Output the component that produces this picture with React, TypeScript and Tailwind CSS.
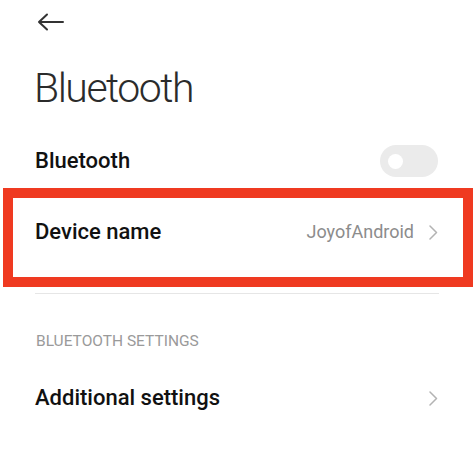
import React from "react";

function Chevron() {
  return (
    <svg width="9" height="15" viewBox="0 0 9 15" fill="none">
      <path d="M1 1 L7.5 7.5 L1 14" stroke="#b3b3b3" strokeWidth="1.5" strokeLinecap="round" strokeLinejoin="round" />
    </svg>
  );
}

export default function App() {
  return (
    <div className="w-[474px] h-[473px] bg-white overflow-hidden" style={{ fontFamily: "Roboto, 'Noto Sans', sans-serif" }}>
      {/* Header */}
      <div className="h-[44px] flex items-center pl-[37px]">
        <svg width="27" height="18" viewBox="0 0 27 18" fill="none">
          <path d="M2 9 H26 M10 1.5 L2 9 L10 16.5" stroke="#333333" strokeWidth="2" strokeLinecap="round" strokeLinejoin="round" />
        </svg>
      </div>

      {/* Title */}
      <h1 className="mt-[24px] pl-[34px] text-[41px] leading-[41px] tracking-[-1.5px] font-light text-[#2b2b2b]">Bluetooth</h1>

      {/* Bluetooth toggle */}
      <div className="mt-[36px] h-[32px] flex items-center justify-between pl-[35px] pr-[36px]">
        <span className="text-[22px] leading-[22px] font-medium text-[#111111]">Bluetooth</span>
        <div className="w-[58px] h-[32px] rounded-full bg-[#ebebeb] flex items-center pl-[8px]">
          <div className="w-[15px] h-[15px] rounded-full bg-white" />
        </div>
      </div>

      {/* Device name (highlighted) */}
      <div className="mt-[11px] ml-[3px] mr-[1px] border-[10px] border-[#ef3a21] pt-[23px] pb-[34px] pl-[22px] pr-[25px] flex items-center justify-between">
        <span className="text-[22px] leading-[22px] font-medium text-[#111111]">Device name</span>
        <div className="flex items-center gap-[15px]">
          <span className="text-[18px] leading-[22px] text-[#8c8c8c]">JoyofAndroid</span>
          <Chevron />
        </div>
      </div>

      {/* Divider */}
      <div className="mt-[6px] mx-[35px] h-px bg-[#e6e6e6]" />

      {/* Section */}
      <div className="mt-[40px] pl-[36px] text-[15.5px] leading-[15px] text-[#9a9a9a]">BLUETOOTH SETTINGS</div>

      <div className="mt-[38px] flex items-center justify-between pl-[35px] pr-[36px]">
        <span className="text-[22px] leading-[22px] font-medium text-[#111111]">Additional settings</span>
        <Chevron />
      </div>
    </div>
  );
}
